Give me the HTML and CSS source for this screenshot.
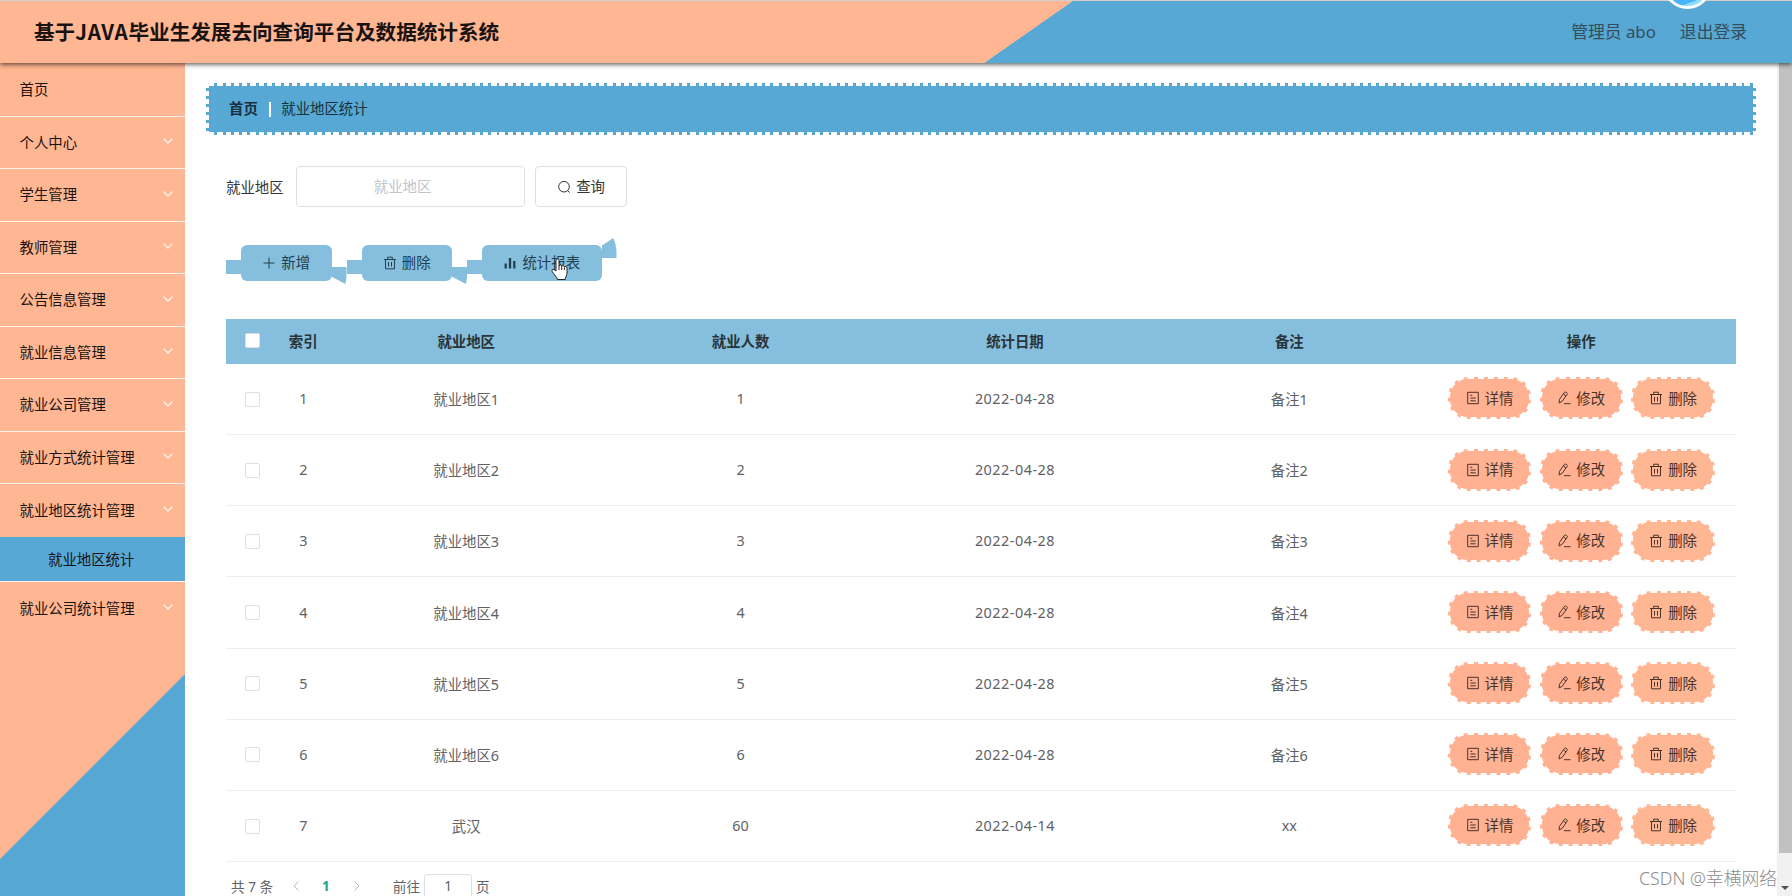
FILE: index.html
```html
<!DOCTYPE html>
<html lang="zh-CN">

<head>
    <meta charset="UTF-8">
    <meta name="viewport" content="width=device-width, initial-scale=1.0">
    <title>基于JAVA毕业生发展去向查询平台及数据统计系统</title>
    <link rel="stylesheet" href="styles.css">
</head>

<body>
    <svg class="symbols">
        <symbol id="down" viewBox="0 0 12 12"><path d="M1.500 3.500L6 8l4.500-4.500" /></symbol>
        <symbol id="left" viewBox="0 0 12 12"><path d="M8.500 1.500L4 6l4.500 4.500" /></symbol>
        <symbol id="right" viewBox="0 0 12 12"><path d="M3.500 1.500L8 6l-4.500 4.500" /></symbol>
        <symbol id="plus" viewBox="0 0 14 14"><path d="M7 1.500v11M1.500 7h11" /></symbol>
        <symbol id="search" viewBox="0 0 14 14"><circle cx="7" cy="6.700" r="5.300" /><path d="M10.600 10.600l2 2" /></symbol>
        <symbol id="trash" viewBox="0 0 14 14"><path d="M1 3.500h12M4.700 3.300V1.200h4.600v2.100M2.500 3.700v9.100h9V3.700M5.500 6v4.500M8.500 6v4.500" /></symbol>
        <symbol id="doc" viewBox="0 0 14 14"><path d="M1.700 1.300h10.600v11.400H1.700zM4.300 4.300h2M4.300 7h5.400M4.300 9.800h5.400" /></symbol>
        <symbol id="edit" viewBox="0 0 14 14"><path d="M2 12l.5-3.700L7.500 1.300q.6-.7 1.400-.2l1 .7q.8.600.3 1.400L5.200 10.300zM6.500 3l2.600 1.900M7 12.700h6.500" /></symbol>
        <symbol id="chart" viewBox="0 0 14 14"><path d="M2.700 12.500V7.500M7 12.500V2M11.300 12.500V5" stroke-width="2.300" /></symbol>
    </svg>

    <div class="header">
        <h1 class="title">基于<span class="latin">JAVA</span>毕业生发展去向查询平台及数据统计系统</h1>
        <div class="user">
            <span>管理员 abo</span>
            <span>退出登录</span>
        </div>
        <div class="ball"></div>
    </div>

    <div class="wrap">
        <div class="sidebar">
            <div class="menu">首页</div>
            <div class="menu">个人中心<svg class="arrow"><use href="#down" /></svg></div>
            <div class="menu">学生管理<svg class="arrow"><use href="#down" /></svg></div>
            <div class="menu">教师管理<svg class="arrow"><use href="#down" /></svg></div>
            <div class="menu">公告信息管理<svg class="arrow"><use href="#down" /></svg></div>
            <div class="menu">就业信息管理<svg class="arrow"><use href="#down" /></svg></div>
            <div class="menu">就业公司管理<svg class="arrow"><use href="#down" /></svg></div>
            <div class="menu">就业方式统计管理<svg class="arrow"><use href="#down" /></svg></div>
            <div class="menu open">就业地区统计管理<svg class="arrow"><use href="#down" /></svg></div>
            <div class="submenu">就业地区统计</div>
            <div class="menu last">就业公司统计管理<svg class="arrow"><use href="#down" /></svg></div>
        </div>

        <div class="main">
            <div class="breadcrumb">
                <b>首页</b>
                <i class="sep"></i>
                <span>就业地区统计</span>
            </div>

            <div class="search">
                <label>就业地区</label>
                <input class="keyword" type="text" placeholder="就业地区">
                <button class="query"><svg class="icon"><use href="#search" /></svg>查询</button>
            </div>

            <div class="tools">
                <div class="tool">
                    <i class="tab"></i>
                    <button><svg class="icon"><use href="#plus" /></svg>新增</button>
                    <i class="tail"></i>
                </div>
                <div class="tool">
                    <i class="tab"></i>
                    <button><svg class="icon"><use href="#trash" /></svg>删除</button>
                    <i class="tail"></i>
                </div>
                <div class="tool wide">
                    <i class="tab"></i>
                    <button><svg class="icon"><use href="#chart" /></svg>统计报表</button>
                    <i class="tail up"></i>
                    <svg class="hand" viewBox="0 0 17 23">
                        <path d="M5 13V2.500c0-2 3-2 3 0V8c.3-1.500 2.700-1.300 2.700.3.500-1.200 2.700-.9 2.700.7.600-1 2.600-.6 2.600 1v5c0 2.500-1.500 3.500-1.800 6.500H6.500C6 19 2.500 16 1.200 13.500c-.8-1.800 1.300-2.600 2.300-1.500z" />
                        <path d="M8 8v4M10.700 8.500V12M13.400 9.500V12" />
                    </svg>
                </div>
            </div>

            <table>
                <colgroup>
                    <col class="c-check"><col class="c-index"><col><col><col><col><col class="c-ops">
                </colgroup>
                <thead>
                    <tr>
                        <th><i class="box"></i></th>
                        <th>索引</th>
                        <th>就业地区</th>
                        <th>就业人数</th>
                        <th>统计日期</th>
                        <th>备注</th>
                        <th>操作</th>
                    </tr>
                </thead>
                <tbody class="rows"></tbody>
            </table>

            <div class="pager">
                <span class="total">共 7 条</span>
                <svg class="page-arrow"><use href="#left" /></svg>
                <b class="current">1</b>
                <svg class="page-arrow"><use href="#right" /></svg>
                <span class="goto">前往</span>
                <input class="page" type="text" value="1">
                <span>页</span>
            </div>
        </div>

        <div class="scrollbar">
            <div class="thumb"></div>
            <div class="scroll-down"></div>
        </div>
    </div>

    <div class="watermark">CSDN @幸横网络</div>

    <script>
        const list = [
            ["就业地区1", 1, "2022-04-28", "备注1"],
            ["就业地区2", 2, "2022-04-28", "备注2"],
            ["就业地区3", 3, "2022-04-28", "备注3"],
            ["就业地区4", 4, "2022-04-28", "备注4"],
            ["就业地区5", 5, "2022-04-28", "备注5"],
            ["就业地区6", 6, "2022-04-28", "备注6"],
            ["武汉", 60, "2022-04-14", "xx"]
        ];
        const rows = document.querySelector(".rows");

        list.forEach((item, i) => {
            const cells = item.map((value) => `<td>${value}</td>`).join("");
            rows.insertAdjacentHTML("beforeend", `
                <tr>
                    <td><i class="box"></i></td>
                    <td>${i + 1}</td>
                    ${cells}
                    <td>
                        <div class="ops">
                            <button class="pink"><svg class="icon"><use href="#doc" /></svg>详情</button>
                            <button class="pink"><svg class="icon"><use href="#edit" /></svg>修改</button>
                            <button><svg class="icon"><use href="#trash" /></svg>删除</button>
                        </div>
                    </td>
                </tr>
            `);
        });
    </script>
</body>

</html>
```
FILE: styles.css
```css
* {
    box-sizing: border-box;
    margin: 0;
    padding: 0;
}

body {
    height: 100vh;
    overflow: hidden;
    background-color: #fff;
    font-family: "Noto Sans", "Noto Sans CJK SC", sans-serif;
    font-size: 14.4px;
    color: #333;
}

button,
input {
    font-family: inherit;
    font-size: inherit;
    color: inherit;
}

svg {
    fill: none;
    stroke: currentColor;
}

.symbols {
    display: none;
}

.icon {
    width: 14px;
    height: 14px;
    margin: 2px 5px 0 0;
    flex: none;
}

.header {
    position: relative;
    z-index: 2;
    height: 63px;
    display: flex;
    justify-content: space-between;
    align-items: center;
    padding: 0 45px 2px 34px;
    border-top: 1px solid #d5cfcb;
    background: linear-gradient(145deg, #ffb693 615px, #57a8d4 615.8px);
    box-shadow: 0 1px 5px rgba(0, 0, 0, .75);
    overflow: clip;
    overflow-clip-margin: 8px;
}

.title {
    font-size: 20.6px;
    font-weight: 700;
    color: #181210;
}

.latin {
    font-family: "Noto Sans CJK SC", sans-serif;
    letter-spacing: .8px;
}

.user {
    display: flex;
    gap: 24px;
    font-size: 16.8px;
    color: #334d5b;
}

/* floating ball hanging over the top edge */
.ball {
    position: absolute;
    left: 1663px;
    top: -41px;
    width: 49px;
    height: 49px;
    border: 3px solid #fff;
    border-radius: 50%;
    background: linear-gradient(160deg, #48b4f8 82%, #8cdcff 83%);
}

.wrap {
    display: flex;
    height: calc(100vh - 63px);
}

.sidebar {
    width: 185px;
    flex: none;
    padding-top: 1px;
    background: linear-gradient(135deg, #ffb693 562.500px, #57a8d4 563.300px);
    color: #1c1210;
}

.menu {
    height: 52.5px;
    padding: 0 11px 2px 19.5px;
    display: flex;
    align-items: center;
    justify-content: space-between;
    border-bottom: 1px solid #fff3ec;
}

.menu.open,
.menu.last {
    border-bottom: 0;
}

.arrow {
    width: 12px;
    height: 12px;
    color: #fff3ec;
    stroke-width: 1.3;
}

.submenu {
    height: 45.500px;
    padding-left: 48px;
    display: flex;
    align-items: center;
    background-color: #57a8d4;
    border-bottom: 1px solid #fff3ec;
}

.main {
    flex: 1;
    min-width: 0;
    padding: 20px 21px 0;
}

/* the strips on the four edges make the stamp teeth */
.breadcrumb {
    height: 52px;
    padding: 0 23px 3px;
    display: flex;
    align-items: center;
    color: #16303d;
    background:
        repeating-linear-gradient(90deg, #fff 0 5.300px, #57a8d4 5.300px 8.300px) 3px 0 / 1544px 3px no-repeat,
        repeating-linear-gradient(90deg, #fff 0 5.300px, #57a8d4 5.300px 8.300px) 3px 100% / 1544px 3px no-repeat,
        repeating-linear-gradient(#fff 0 5px, #57a8d4 5px 8px) 0 0 / 3px 100% no-repeat,
        repeating-linear-gradient(#fff 0 5px, #57a8d4 5px 8px) 100% 0 / 3px 100% no-repeat,
        #57a8d4;
}

.sep {
    width: 2px;
    height: 15px;
    margin: 4px 10.500px 0 11px;
    background-color: #fff;
}

.search {
    margin: 31px 0 0 20px;
    height: 41px;
    display: flex;
    align-items: center;
}

.keyword {
    width: 229px;
    height: 41px;
    margin: 0 10px 0 12.500px;
    padding: 0 31px 0 15px;
    border: 1px solid #dcdfe6;
    border-radius: 4px;
    text-align: center;
}

.keyword::placeholder {
    color: #c0c4cc;
}

.query {
    width: 92px;
    height: 41px;
    padding-bottom: 2px;
    display: flex;
    align-items: center;
    justify-content: center;
    border: 1px solid #dcdfe6;
    border-radius: 4px;
    background-color: #fff;
}

.tools {
    margin: 31px 0 0 20px;
    display: flex;
}

.tool {
    position: relative;
    display: flex;
}

.tool button {
    width: 90.500px;
    height: 36px;
    margin-top: 7px;
    padding-bottom: 3px;
    display: flex;
    align-items: center;
    justify-content: center;
    border: 0;
    border-radius: 6px;
    background-color: #85bfdd;
    color: #23404f;
}

.tool.wide button {
    width: 119.500px;
}

.tab {
    width: 15px;
    height: 14px;
    margin-top: 22px;
    background-color: #85bfdd;
}

.tail {
    width: 15px;
    height: 17px;
    margin-top: 29px;
    background-color: #85bfdd;
    clip-path: polygon(0 0, 100% 0, 100% 60%, 93% 100%, 0 58%);
}

.tail.up {
    height: 20px;
    margin-top: 0;
    clip-path: polygon(0 40%, 78% 0, 90% 22%, 100% 60%, 100% 100%, 0 100%);
}

.hand {
    position: absolute;
    left: 84px;
    top: 20px;
    width: 17px;
    height: 23px;
    fill: #fff;
    stroke: #222;
}

table {
    width: 1510px;
    margin: 34.600px 0 0 20px;
    border-collapse: collapse;
    table-layout: fixed;
    text-align: center;
}

.c-check,
.c-index {
    width: 51.500px;
}

.c-ops {
    width: 309.500px;
}

th {
    height: 45px;
    padding-bottom: 2px;
    background-color: #85bfdd;
    color: #2a3338;
    font-weight: 700;
}

td {
    height: 71.140px;
    padding-bottom: 1px;
    border-bottom: 1px solid #ebeef5;
    color: #606266;
}

/* dates */
td:nth-child(5) {
    letter-spacing: .5px;
}

.box {
    display: inline-block;
    width: 15px;
    height: 15px;
    margin: -2px 0 0 1px;
    border: 1px solid #dcdfe6;
    border-radius: 2px;
    background-color: #fff;
    vertical-align: middle;
}

.ops {
    display: flex;
    justify-content: center;
    gap: 8.500px;
}

.ops button {
    width: 83.300px;
    height: 42px;
    padding-bottom: 2px;
    display: flex;
    align-items: center;
    justify-content: center;
    border: 2px dashed #fff;
    border-radius: 20px;
    background-color: #ffb693;
    color: #4a332a;
}

.ops .pink {
    background-color: #ffb192;
}

.pager {
    margin: 11px 0 0 25px;
    display: flex;
    align-items: center;
    height: 26px;
    font-size: 13.600px;
    color: #606266;
}

.page-arrow {
    width: 12px;
    height: 12px;
    margin: 0 20px 0 17px;
    color: #b5b9c2;
}

.current {
    color: #1fa294;
}

.current + .page-arrow {
    margin: 0 30px 0 21px;
}

.page {
    width: 48px;
    height: 29px;
    margin: 5px 4px 0;
    padding-bottom: 5px;
    border: 1px solid #dcdfe6;
    border-radius: 3px;
    text-align: center;
}

.scrollbar {
    width: 15px;
    flex: none;
    padding-left: 2px;
    background-color: #f1f1f1;
}

.thumb {
    height: 790px;
    background-color: #c1c1c1;
}

.scroll-down {
    width: 8px;
    height: 4px;
    margin: 33px 0 0 2px;
    background-color: #505050;
    clip-path: polygon(0 0, 100% 0, 50% 100%);
}

.watermark {
    position: absolute;
    z-index: 3;
    right: 15px;
    bottom: 5px;
    font-size: 17.8px;
    line-height: 26px;
    font-weight: 300;
    color: #8c8c8c;
}
```
